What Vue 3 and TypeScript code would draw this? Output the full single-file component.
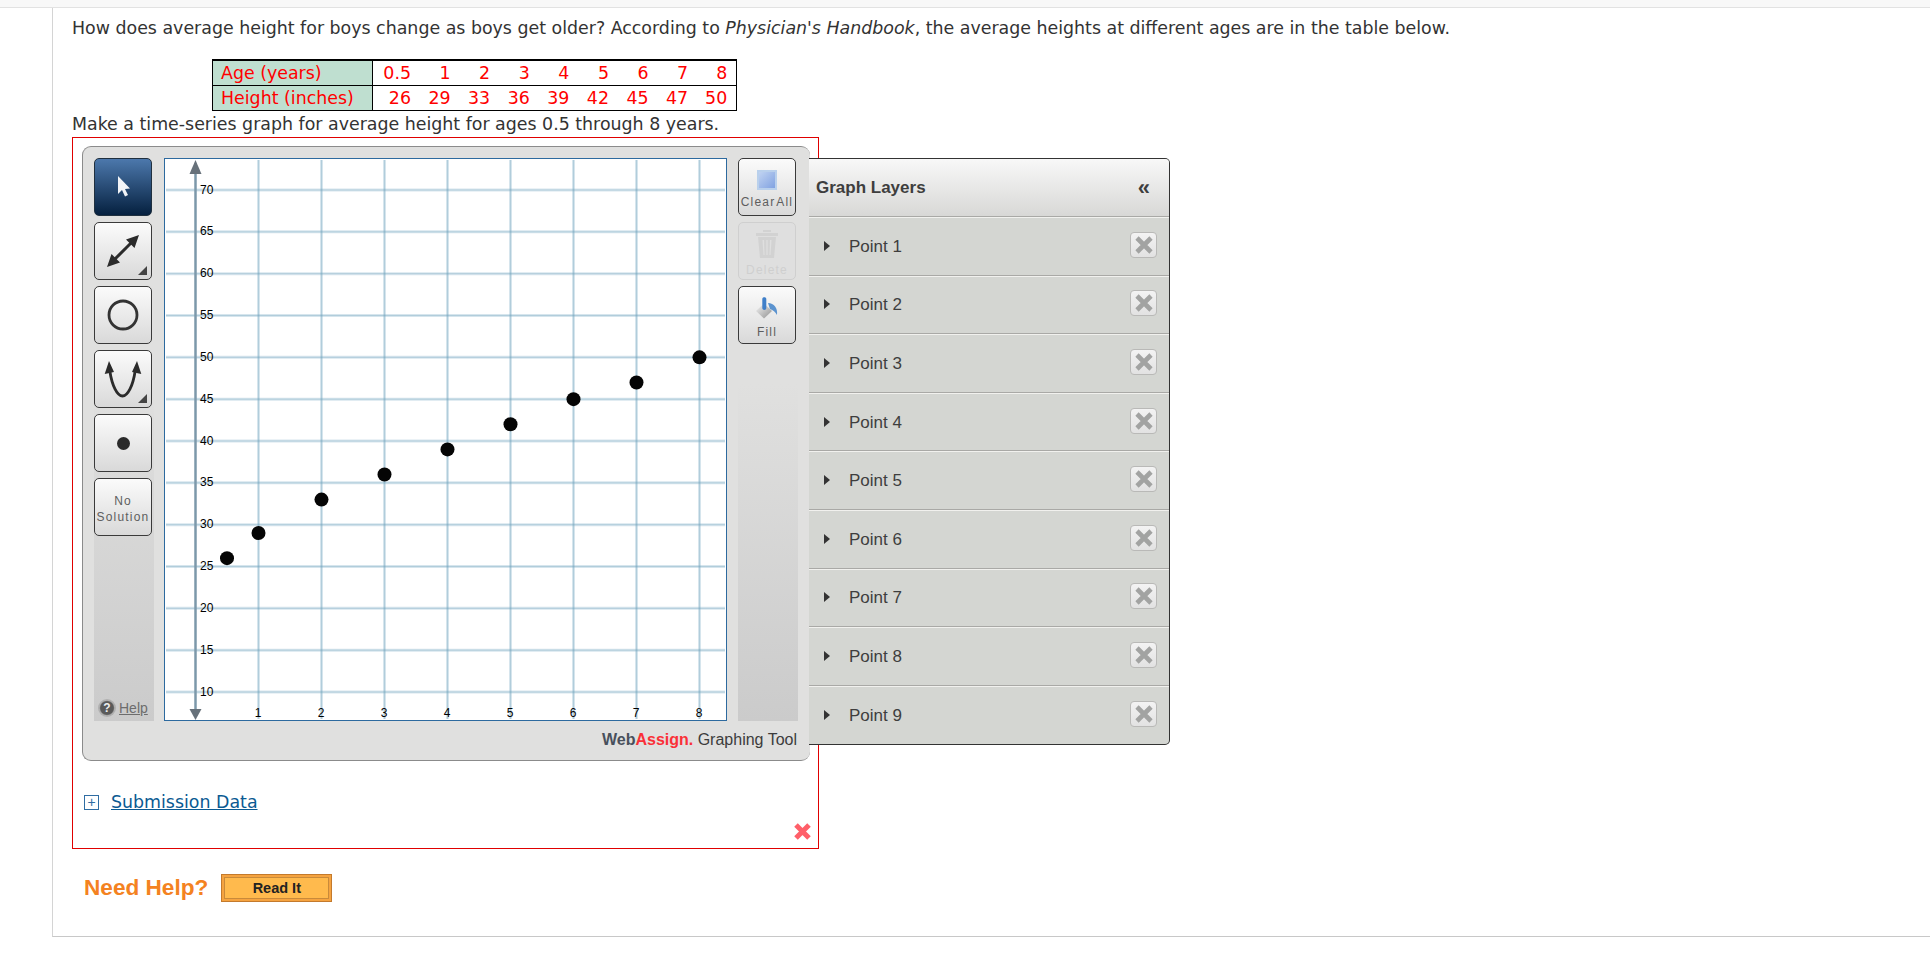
<script setup lang="ts">
const ages = ['0.5', '1', '2', '3', '4', '5', '6', '7', '8']
const heights = [26, 29, 33, 36, 39, 42, 45, 47, 50]
const agesNum = [0.5, 1, 2, 3, 4, 5, 6, 7, 8]

// graph space, in px inside the svg
const px = (x: number) => 31.5 + x * 63
const py = (y: number) => 32 + (70 - y) * 8.367

const yTicks = [70, 65, 60, 55, 50, 45, 40, 35, 30, 25, 20, 15, 10]
const xTicks = [1, 2, 3, 4, 5, 6, 7, 8]
const points = heights.map((h, i) => ({ cx: px(agesNum[i]), cy: py(h) }))
const layers = points.map((_, i) => `Point ${i + 1}`)
</script>

<template>
  <div class="page">
    <div class="top-band" />
    <main class="content">
      <p class="question">
        How does average height for boys change as boys get older? According to <em>Physician's Handbook</em>, the average heights at different ages are in the table below.
      </p>

      <table class="data">
        <colgroup>
          <col class="c-head" />
          <col class="c-first" />
          <col v-for="n in 8" :key="n" class="c-val" />
        </colgroup>
        <tbody>
          <tr>
            <th>Age (years)</th>
            <td v-for="a in ages" :key="a">{{ a }}</td>
          </tr>
          <tr>
            <th>Height (inches)</th>
            <td v-for="h in heights" :key="h">{{ h }}</td>
          </tr>
        </tbody>
      </table>

      <p class="prompt">Make a time-series graph for average height for ages 0.5 through 8 years.</p>

      <section class="answer">
        <div class="widget">
          <div class="tools-row">
            <div class="toolbar">
              <button class="tool active">
                <svg width="20" height="24" viewBox="0 0 20 24"><path d="M5 1 L5 19 L9 15 L12 21.5 L15 20 L12 14 L17 13.5 Z" fill="#f2f4f7" /></svg>
              </button>
              <button class="tool">
                <svg width="34" height="34" viewBox="0 0 34 34">
                  <path d="M6 28 L28 6" stroke="#2b2b2b" stroke-width="3" />
                  <path d="M1 33 L5.5 20 L14 28.5 Z M33 1 L20 5.5 L28.5 14 Z" fill="#2b2b2b" />
                </svg>
                <i class="corner" />
              </button>
              <button class="tool">
                <svg width="34" height="34" viewBox="0 0 34 34"><circle cx="17" cy="17" r="14" fill="none" stroke="#333" stroke-width="2.8" /></svg>
              </button>
              <button class="tool">
                <svg width="42" height="40" viewBox="0 0 42 40">
                  <path d="M8 13 C10 26 15 37 20.5 37 C26 37 31 26 33 13" fill="none" stroke="#2b2b2b" stroke-width="2.8" />
                  <path d="M7 2 L2.7 15 L12 13 Z M35 2 L30 13 L39.3 15 Z" fill="#2b2b2b" />
                </svg>
                <i class="corner" />
              </button>
              <button class="tool">
                <span class="dot" />
              </button>
              <button class="tool text-tool">No<br />Solution</button>
              <a class="help"><span class="help-icon">?</span><u>Help</u></a>
            </div>

            <svg class="graph" width="563" height="563" viewBox="0 0 563 563">
              <g class="grid soft">
                <line v-for="t in yTicks" :key="'h' + t" x1="2" x2="561" :y1="py(t)" :y2="py(t)" />
                <line v-for="t in xTicks" :key="'v' + t" y1="2" y2="561" :x1="px(t)" :x2="px(t)" />
              </g>
              <g class="grid core">
                <line v-for="t in yTicks" :key="'hc' + t" x1="2" x2="561" :y1="py(t)" :y2="py(t)" />
                <line v-for="t in xTicks" :key="'vc' + t" y1="2" y2="561" :x1="px(t)" :x2="px(t)" />
              </g>
              <line class="axis" x1="31.5" x2="31.5" y1="10" y2="555" />
              <path class="arrow" d="M31.5 2 L37.5 16 L25.5 16 Z" />
              <path class="arrow" d="M25.5 551 L37.5 551 L31.5 562 Z" />
              <text v-for="t in yTicks" :key="'yl' + t" class="tick" x="36" :y="py(t) + 3.5">{{ t }}</text>
              <text v-for="t in xTicks" :key="'xl' + t" class="tick" text-anchor="middle" :x="px(t) - 0.5" y="559">{{ t }}</text>
              <circle v-for="(p, i) in points" :key="'p' + i" :cx="p.cx" :cy="p.cy" r="7" fill="#050505" />
            </svg>

            <div class="toolbar side">
              <button class="tool labelled">
                <svg width="20" height="20" viewBox="0 0 20 20">
                  <defs>
                    <linearGradient id="clearFill" x1="0" y1="0" x2="1" y2="1">
                      <stop offset="0" stop-color="#c4d6f2" />
                      <stop offset="1" stop-color="#7d9fe0" />
                    </linearGradient>
                  </defs>
                  <rect x="1" y="1" width="18" height="18" fill="url(#clearFill)" stroke="#b9d0ec" stroke-width="2" />
                </svg>
                <span>Clear All</span>
              </button>
              <button class="tool labelled disabled">
                <svg width="22" height="28" viewBox="0 0 22 28" fill="#d2d2d2">
                  <path d="M0 3 H22 V6 H0 Z M7 0 H15 V2 H7 Z" />
                  <path d="M2 7 H20 L18 28 H4 Z M6.5 10 L7.5 25 H8.5 L8 10 Z M10.4 10 V25 H11.6 V10 Z M14 10 L13.5 25 H14.5 L15.5 10 Z" fill-rule="evenodd" />
                </svg>
                <span>Delete</span>
              </button>
              <button class="tool labelled">
                <svg width="22" height="23" viewBox="0 0 22 23">
                  <defs>
                    <linearGradient id="bucket" x1="0" y1="0" x2="1" y2="1">
                      <stop offset="0" stop-color="#f6f6f6" />
                      <stop offset="1" stop-color="#8f8f8f" />
                    </linearGradient>
                  </defs>
                  <path d="M0 14 L8 6.5 L16 14 L8 21.5 Z" fill="url(#bucket)" />
                  <path d="M6.3 2 C6.3 -0.5 10.3 -0.5 10.3 2 V11 C10.3 13.5 6.3 13.5 6.3 11 Z" fill="#3f7fc9" />
                  <path d="M12 6 C18 6 22 11 21 18 C19.5 15 17 13 14 12 Z" fill="#5b93cf" />
                </svg>
                <span>Fill</span>
              </button>
            </div>
          </div>
          <div class="brand"><b>Web<span>Assign.</span></b> Graphing Tool</div>

          <aside class="layers">
            <header class="layers-head">
              <span>Graph Layers</span>
              <span class="collapse">«</span>
            </header>
            <div v-for="l in layers" :key="l" class="layer">
              <i class="caret" />
              <span class="layer-name">{{ l }}</span>
              <button class="remove">
                <svg width="18" height="18" viewBox="0 0 18 18"><path d="M2 2 L16 16 M16 2 L2 16" stroke="#a2a3a2" stroke-width="4.6" /></svg>
              </button>
            </div>
          </aside>
        </div>

        <div class="submission">
          <span class="plus">+</span>
          <a>Submission Data</a>
        </div>
        <svg class="wrong" width="19" height="19" viewBox="0 0 19 19"><path d="M3 3 L16 16 M16 3 L3 16" stroke="#ff5f69" stroke-width="5" /></svg>
      </section>

      <div class="need-help">
        <span>Need Help?</span>
        <button class="read-it"><span>Read It</span></button>
      </div>
    </main>
  </div>
</template>

<style>
html, body { margin: 0; background: #fff; }
</style>

<style scoped>
.page {
  height: 962px;
  overflow: hidden;
  font-family: "DejaVu Sans", sans-serif;
  color: #333;
}

.top-band {
  height: 7px;
  background: #f8f8f8;
  border-bottom: 1px solid #e2e2e2;
}

.content {
  margin-left: 52px;
  height: 928px;
  border-left: 1px solid #d4d4d4;
  border-bottom: 1px solid #c8c8c8;
  padding-left: 19px;
}

.question {
  margin: 0;
  padding-top: 10px;
  font-size: 17.4px;
  line-height: 20px;
  white-space: nowrap;
}

.data {
  margin: 21px 0 0 140px;
  border-collapse: collapse;
  border-top: 2px solid #000;
  table-layout: fixed;
  width: 524px;
  font-size: 17.4px;
  line-height: 24px;
  color: #f00;
}
.c-head { width: 160px; }
.c-first { width: 47px; }
.c-val { width: 39.6px; }
.data th, .data td {
  border: 1px solid #000;
  padding: 0;
  font-weight: normal;
}
.data th {
  text-align: left;
  padding-left: 8px;
  background: #bfdfd0;
  white-space: nowrap;
}
.data td {
  text-align: right;
  padding-right: 8.5px;
  border-left: 0;
  border-right: 0;
}
.data td:first-of-type { border-left: 1px solid #000; }
.data td:last-child { border-right: 1px solid #000; }

.prompt {
  margin: 0;
  padding-top: 3px;
  font-size: 17.4px;
  line-height: 20px;
  white-space: nowrap;
}

.answer {
  position: relative;
  box-sizing: border-box;
  width: 747px;
  height: 712px;
  margin: 3px 0 0 0;
  border: 1.5px solid #e00000;
  padding: 8px 0 0 9px;
}

.widget {
  position: relative;
  box-sizing: border-box;
  width: 728px;
  height: 615px;
  background: #e0e0df;
  border: 1px solid #8b8b8b;
  border-width: 1px 0 1.5px 1px;
  border-radius: 9px;
  padding: 11px 11px 0 11px;
}

.tools-row {
  display: flex;
  gap: 10px;
}

.toolbar {
  position: relative;
  width: 60px;
  height: 563px;
  display: flex;
  flex-direction: column;
  gap: 6px;
  background: linear-gradient(#e0e0df 40%, #cbcbcb);
}
.toolbar.side {
  margin-left: 1px;
}

.tool {
  position: relative;
  box-sizing: border-box;
  width: 58px;
  height: 58px;
  flex: none;
  padding: 0;
  border: 1px solid #3a3a3a;
  border-radius: 5px;
  background: linear-gradient(#fbfbfb, #d9d9d9);
  display: flex;
  flex-direction: column;
  align-items: center;
  justify-content: center;
}
.tool.active {
  background: linear-gradient(#4c78ac, #05203f);
  border-color: #20303f;
}
.corner {
  position: absolute;
  right: 4px;
  bottom: 4px;
  width: 0;
  height: 0;
  border-left: 9px solid transparent;
  border-bottom: 9px solid #444;
}
.dot {
  width: 13px;
  height: 13px;
  border-radius: 50%;
  background: #2a2a2a;
}
.text-tool, .labelled {
  font-family: "Liberation Sans", Arial, sans-serif;
  font-size: 12px;
  letter-spacing: 1.2px;
  line-height: 16px;
  color: #5e5e5e;
}
.text-tool {
  display: block;
  text-align: center;
  padding-top: 4px;
}
.labelled {
  padding-top: 6px;
  gap: 4px;
  white-space: nowrap;
  word-spacing: -3px;
}
.labelled.disabled {
  border-color: #cfcfcf;
  background: #dfdfdf;
  color: #cfcfcf;
}

.help {
  position: absolute;
  left: 4px;
  bottom: 4px;
  display: flex;
  align-items: center;
  gap: 3px;
  font-family: "Liberation Sans", Arial, sans-serif;
  font-size: 14px;
  color: #6d6d6d;
}
.help-icon {
  width: 18px;
  height: 18px;
  border-radius: 50%;
  background: radial-gradient(#5a5a5a 50%, #b0b0b0 60%);
  color: #eee;
  font-size: 12px;
  font-weight: bold;
  text-align: center;
  line-height: 18px;
}

.graph {
  display: block;
  flex: none;
  background: #fff;
  outline: 1px solid #2d6a9f;
  outline-offset: -1px;
}
.grid.soft line {
  stroke: rgba(120, 170, 195, 0.3);
  stroke-width: 3;
}
.grid.core line {
  stroke: rgba(110, 160, 185, 0.35);
  stroke-width: 1;
}
.axis {
  stroke: #7c98aa;
  stroke-width: 2.5;
}
.arrow {
  fill: #67717a;
}
.tick {
  font-family: "Liberation Sans", Arial, sans-serif;
  font-size: 12px;
  fill: #000;
}

.brand {
  margin-top: 10px;
  padding-right: 2px;
  text-align: right;
  font-family: "Liberation Sans", Arial, sans-serif;
  font-size: 16px;
  line-height: 18px;
  color: #3c3c3c;
}
.brand b { color: #48505c; }
.brand b span { color: #fa3038; }

.layers {
  position: absolute;
  left: 726px;
  top: 11px;
  box-sizing: border-box;
  width: 361px;
  height: 586.5px;
  font-family: "Liberation Sans", Arial, sans-serif;
  color: #3e3e3e;
  background: #d4d6d2;
  border: 1px solid #333;
  border-left: 0;
  border-radius: 0 5px 5px 0;
  overflow: hidden;
}
.layers-head {
  box-sizing: border-box;
  height: 57px;
  display: flex;
  align-items: center;
  justify-content: space-between;
  padding: 0 19px 0 7px;
  font-size: 17px;
  font-weight: bold;
  background: linear-gradient(#f8f8f8, #d8d8d6);
}
.collapse {
  font-size: 22px;
  line-height: 20px;
}
.layer {
  box-sizing: border-box;
  height: 58.6px;
  display: flex;
  align-items: center;
  padding: 0 12px 0 15px;
  font-size: 17px;
  border-top: 1.5px solid #a9a9a6;
  box-shadow: inset 0 1px 0 #f1f1ee;
}
.caret {
  width: 0;
  height: 0;
  border-left: 6px solid #333;
  border-top: 5px solid transparent;
  border-bottom: 5px solid transparent;
}
.layer-name {
  margin: 2px 0 0 19px;
  flex: 1;
}
.remove {
  box-sizing: border-box;
  width: 27px;
  height: 26px;
  margin-bottom: 2px;
  padding: 0;
  border: 1px solid #b9b9b7;
  border-radius: 4px;
  background: linear-gradient(#f3f3f3, #e2e2e2);
  display: flex;
  align-items: center;
  justify-content: center;
}

.submission {
  display: flex;
  align-items: center;
  gap: 12px;
  margin: 30px 0 0 2px;
  font-size: 17.4px;
  line-height: 22px;
}
.submission a {
  color: #0b5a92;
  text-decoration: underline;
}
.plus {
  box-sizing: border-box;
  width: 15px;
  height: 15px;
  border: 1.5px solid #2f6da3;
  color: #2f6da3;
  font-family: "Liberation Sans", Arial, sans-serif;
  font-size: 14px;
  line-height: 12px;
  text-align: center;
}

.wrong {
  position: absolute;
  right: 6px;
  bottom: 7px;
}

.need-help {
  display: flex;
  align-items: center;
  gap: 13px;
  margin: 25px 0 0 12px;
  font-family: "Liberation Sans", Arial, sans-serif;
  font-size: 22.6px;
  font-weight: bold;
  color: #f48221;
}
.read-it {
  box-sizing: border-box;
  width: 111px;
  height: 28px;
  padding: 2px;
  border: 1px solid #c47a2c;
  background: #f5a340;
  font-family: inherit;
}
.read-it span {
  display: block;
  height: 100%;
  box-sizing: border-box;
  border: 1px solid #c98a3a;
  background: #ffba4d;
  color: #222;
  font-size: 14.5px;
  font-weight: bold;
  line-height: 20px;
}
</style>
